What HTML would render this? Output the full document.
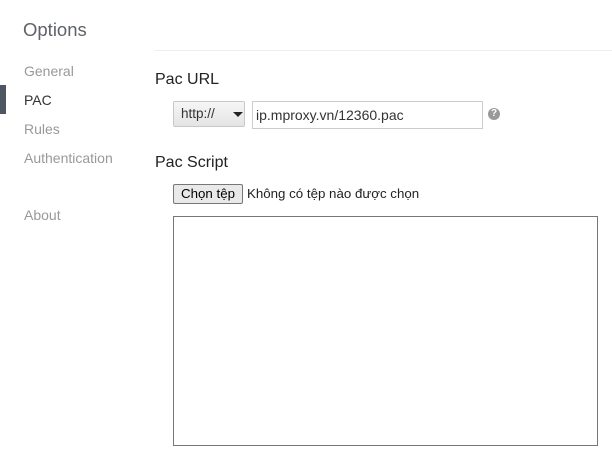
<!DOCTYPE html>
<html><head><meta charset="utf-8"><style>
body{margin:0;width:612px;height:465px;background:#fff;font-family:"Liberation Sans",sans-serif;position:relative;overflow:hidden}
.a{position:absolute;white-space:nowrap}
.nav{font-size:14px;color:#999}
</style></head><body>
<div class="a" style="left:23px;top:19px;font-size:18.5px;color:#5f6368">Options</div>
<div class="a nav" style="left:24px;top:63px">General</div>
<div class="a" style="left:0;top:85px;width:6px;height:29px;background:#4e5661"></div>
<div class="a nav" style="left:24px;top:92px;color:#333">PAC</div>
<div class="a nav" style="left:24px;top:121px">Rules</div>
<div class="a nav" style="left:24px;top:150px">Authentication</div>
<div class="a nav" style="left:24px;top:207px">About</div>
<div class="a" style="left:155px;top:50px;width:457px;height:1px;background:#eee"></div>
<div class="a" style="left:155px;top:71px;font-size:16px;color:#222">Pac URL</div>
<div class="a" style="left:173px;top:101px;width:72px;height:26px;box-sizing:border-box;border:1px solid #c8c8c8;border-radius:2px;background:linear-gradient(#f6f6f6,#e4e4e4);font-size:13.5px;color:#333;line-height:24px;padding-left:7px">http://<span style="position:absolute;left:59px;top:10px;border-left:5px solid transparent;border-right:5px solid transparent;border-top:5px solid #222;width:0;height:0"></span></div>
<div class="a" style="left:252px;top:101px;width:231px;height:28px;box-sizing:border-box;border:1px solid #ccc;font-size:14px;color:#333;line-height:26px;padding-left:3px">ip.mproxy.vn/12360.pac</div>
<div class="a" style="left:488px;top:108px;width:12px;height:12px;border-radius:50%;background:#999;color:#fff;font-size:10px;font-weight:bold;text-align:center;line-height:12px">?</div>
<div class="a" style="left:155px;top:154px;font-size:16px;color:#222">Pac Script</div>
<div class="a" style="left:173px;top:184px;width:70px;height:20px;box-sizing:border-box;border:1px solid #777;border-radius:2px;background:#e9e9e9;font-size:13.3px;color:#000;line-height:18px;text-align:center">Chọn tệp</div>
<div class="a" style="left:247px;top:186px;font-size:13.3px;color:#222">Không có tệp nào được chọn</div>
<div class="a" style="left:173px;top:216px;width:425px;height:230px;box-sizing:border-box;border:1px solid #777"></div>
</body></html>
